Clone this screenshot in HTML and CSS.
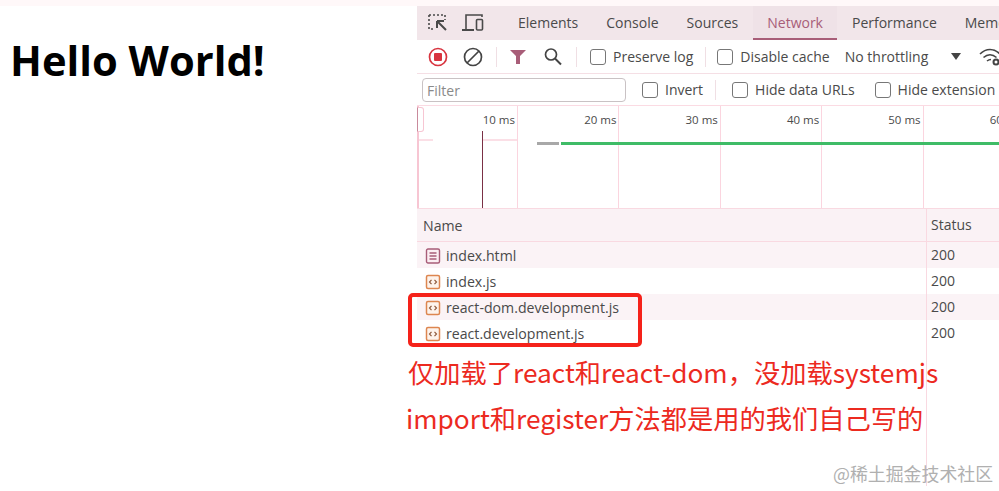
FILE: index.html
```html
<!doctype html>
<html lang="en">
<head>
    <meta charset="UTF-8">
    <title>Hello World</title>
    <link rel="stylesheet" href="styles.css">
</head>
<body>
<div class="page">
    <h1>Hello World!</h1>
    <div class="devtools">
        <div class="tabs">
            <svg class="tab-icon" width="22" height="22" viewBox="0 0 22 22" fill="none" stroke="#4a4a4a" stroke-width="1.6">
                <path d="M2 3h16v5M2 3v14h5" stroke-dasharray="2 2"/>
                <path d="M10 9h7M10 9v7M10 9l9 9" stroke-width="2"/>
            </svg>
            <svg class="tab-icon" width="22" height="22" viewBox="0 0 22 22" fill="none" stroke="#4a4a4a" stroke-width="1.6">
                <path d="M4 17V3h16v2"/>
                <path d="M0 18h12" stroke-width="2"/>
                <rect x="14.500" y="7.500" width="6" height="10.500" rx="1"/>
            </svg>
            <span class="tab tab-first">Elements</span>
            <span class="tab">Console</span>
            <span class="tab">Sources</span>
            <span class="tab active">Network</span>
            <span class="tab">Performance</span>
            <span class="tab">Memory</span>
        </div>
        <div class="toolbar">
            <svg class="tool" width="20" height="20" viewBox="0 0 20 20" fill="none">
                <circle cx="10" cy="10" r="8.500" stroke="#d8343f" stroke-width="1.700"/>
                <rect x="6" y="6" width="8" height="8" rx="1" fill="#d8343f"/>
            </svg>
            <svg class="tool ml-15" width="20" height="20" viewBox="0 0 20 20" fill="none" stroke="#444" stroke-width="1.700">
                <circle cx="10" cy="10" r="8.500"/>
                <path d="M4 16L16 4"/>
            </svg>
            <i class="sep sep-a"></i>
            <svg class="tool" width="18" height="16" viewBox="0 0 18 16"><path d="M1 1h16l-6 6v8H7V7z" fill="#a85d78"/></svg>
            <svg class="tool ml-16" width="20" height="20" viewBox="0 0 20 20" fill="none" stroke="#444" stroke-width="1.700">
                <circle cx="8" cy="7.500" r="5.500"/>
                <path d="M12 11.500l6 6" stroke-width="2"/>
            </svg>
            <i class="sep sep-b"></i>
            <label class="check"><i class="box"></i>Preserve log</label>
            <i class="sep sep-c"></i>
            <label class="check"><i class="box"></i>Disable cache</label>
            <span class="throttle">No throttling</span>
            <i class="arrow"></i>
            <svg class="tool wifi" width="24" height="20" viewBox="0 0 24 20" fill="none" stroke="#444" stroke-width="1.600">
                <path d="M1 7c6-6 14-6 20 0M4.500 10.500c4-3.500 9-3.500 13 0M8 14c1.500-1.200 3-1.500 4-1.500"/>
                <circle cx="17" cy="15" r="2.500" stroke-width="2"/>
            </svg>
        </div>
        <div class="filter-row">
            <div class="filter">Filter</div>
            <label class="check check-invert"><i class="box"></i>Invert</label>
            <i class="sep sep-d"></i>
            <label class="check check-urls"><i class="box"></i>Hide data URLs</label>
            <label class="check check-ext"><i class="box"></i>Hide extension</label>
        </div>
        <div class="timeline">
            <div class="tick"><span>10 ms</span></div>
            <div class="tick"><span>20 ms</span></div>
            <div class="tick"><span>30 ms</span></div>
            <div class="tick"><span>40 ms</span></div>
            <div class="tick"><span>50 ms</span></div>
            <div class="tick"><span>60 ms</span></div>
            <i class="handle"></i>
            <i class="dash dash-a"></i>
            <i class="dash dash-b"></i>
            <i class="marker"></i>
            <i class="wait"></i>
            <i class="load"></i>
        </div>
        <div class="row head">
            <div class="col-name">Name</div>
            <div class="col-status">Status</div>
        </div>
        <div class="row odd">
            <div class="col-name">
                <svg width="16" height="16" viewBox="0 0 16 16" fill="#fbeef2" stroke="#a85d78" stroke-width="1.400">
                    <rect x="1.500" y="1" width="13" height="14" rx="1.500"/>
                    <path d="M4.500 5h7M4.500 8h7M4.500 11h7"/>
                </svg>
                index.html
            </div>
            <div class="col-status">200</div>
        </div>
        <div class="row">
            <div class="col-name">
                <svg width="16" height="16" viewBox="0 0 16 16" fill="#fdf3ec" stroke="#dd8650" stroke-width="1.500">
                    <rect x="1.500" y="1.500" width="13" height="13" rx="1.500"/>
                    <path d="M6.500 5.800L4.500 8l2 2.200M9.500 5.800l2 2.200-2 2.200" fill="none" stroke="#8f5a3c" stroke-width="1.200"/>
                </svg>
                index.js
            </div>
            <div class="col-status">200</div>
        </div>
        <div class="row odd">
            <div class="col-name">
                <svg width="16" height="16" viewBox="0 0 16 16" fill="#fdf3ec" stroke="#dd8650" stroke-width="1.500">
                    <rect x="1.500" y="1.500" width="13" height="13" rx="1.500"/>
                    <path d="M6.500 5.800L4.500 8l2 2.200M9.500 5.800l2 2.200-2 2.200" fill="none" stroke="#8f5a3c" stroke-width="1.200"/>
                </svg>
                react-dom.development.js
            </div>
            <div class="col-status">200</div>
        </div>
        <div class="row">
            <div class="col-name">
                <svg width="16" height="16" viewBox="0 0 16 16" fill="#fdf3ec" stroke="#dd8650" stroke-width="1.500">
                    <rect x="1.500" y="1.500" width="13" height="13" rx="1.500"/>
                    <path d="M6.500 5.800L4.500 8l2 2.200M9.500 5.800l2 2.200-2 2.200" fill="none" stroke="#8f5a3c" stroke-width="1.200"/>
                </svg>
                react.development.js
            </div>
            <div class="col-status">200</div>
        </div>
        <div class="row blank">
            <div class="col-name"></div>
            <div class="col-status"></div>
        </div>
    </div>
</div>
<div class="red-box"></div>
<div class="note note-1">仅加载了react和react-dom，没加载systemjs</div>
<div class="note note-2">import和register方法都是用的我们自己写的</div>
<div class="mark">@稀土掘金技术社区</div>
</body>
</html>
```

FILE: styles.css
```css
html, body {
    margin: 0;
    height: 491px;
    overflow: hidden;
    background-color: #fff;
}
body {
    font-family: "Open Sans", "Noto Sans", sans-serif;
    color: #4a4a4a;
}
.page {
    display: flex;
    height: 491px;
    border-top: 6px solid #fff8f9;
    box-sizing: border-box;
}
h1 {
    width: 417px;
    flex: none;
    margin: 0;
    padding: 29px 0 0 10px;
    box-sizing: border-box;
    font-size: 41.700px;
    line-height: 50px;
    font-weight: 700;
    color: #000;
}
.devtools {
    flex: 1;
    min-width: 0;
    overflow: hidden;
    font-size: 14px;
}
.tabs {
    display: flex;
    align-items: center;
    height: 34px;
    padding-left: 10px;
    background-color: #f2e6ea;
    white-space: nowrap;
}
.tab-icon {
    flex: none;
}
.tab-icon + .tab-icon {
    margin-left: 13px;
}
.tab {
    line-height: 34px;
    padding: 0 14px;
    height: 34px;
    box-sizing: border-box;
}
.tab-first {
    margin-left: 20px;
}
.tab.active {
    margin: 0 1px;
    color: #a85d78;
    background-color: #efe2e7;
    border-bottom: 2px solid #a85d78;
}
.toolbar {
    display: flex;
    align-items: center;
    height: 34px;
    padding-left: 11px;
    border-bottom: 1px solid #f5dfe5;
    box-sizing: border-box;
    white-space: nowrap;
}
.tool {
    flex: none;
}
.ml-15 {
    margin-left: 15px;
}
.ml-16 {
    margin-left: 16px;
}
.sep {
    width: 1px;
    height: 20px;
    background-color: #f0dfe4;
    flex: none;
}
.sep-a {
    margin: 0 12px 0 13px;
}
.sep-b {
    margin: 0 13px;
}
.sep-c {
    margin: 0 11px 0 12px;
}
.sep-d {
    margin-left: 12px;
}
.check {
    display: flex;
    align-items: center;
    white-space: nowrap;
}
.box {
    width: 14px;
    height: 14px;
    margin-right: 7px;
    border: 1px solid #777;
    border-radius: 3px;
    flex: none;
}
.throttle {
    margin-left: 15px;
}
.arrow {
    margin-left: 23px;
    border-left: 5px solid transparent;
    border-right: 5px solid transparent;
    border-top: 7px solid #444;
}
.wifi {
    margin-left: 18px;
}
.filter-row {
    display: flex;
    align-items: center;
    height: 32px;
    padding-left: 5px;
    border-bottom: 1px solid #fbdbe3;
    box-sizing: border-box;
    white-space: nowrap;
}
.filter {
    width: 198px;
    height: 22px;
    line-height: 23px;
    padding-left: 4px;
    border: 1px solid #c9c2c4;
    border-radius: 4px;
    color: #8a8a8a;
    flex: none;
}
.check-invert {
    margin-left: 16px;
}
.check-urls {
    margin-left: 16px;
}
.check-ext {
    margin-left: 20px;
}
.timeline {
    position: relative;
    display: flex;
    height: 102px;
    border-left: 2px solid #f7c6d3;
    box-sizing: border-box;
    font-size: 11.500px;
}
.tick {
    flex: none;
    width: 101.400px;
    height: 102px;
    padding: 6px 2px 0 0;
    box-sizing: border-box;
    border-right: 1px solid #fbd5df;
    text-align: right;
    white-space: nowrap;
}
.tick:first-child {
    margin-left: -2.400px;
}
.handle {
    position: absolute;
    left: -2px;
    top: 1px;
    width: 5px;
    height: 23px;
    background-color: #fff;
    border: 1px solid #f7c6d3;
    border-left: 1px solid #c98a9c;
    border-radius: 0 3px 3px 0;
}
.dash {
    position: absolute;
    top: 33px;
    height: 2px;
    background-color: #fbdfe6;
}
.dash-a {
    left: 0;
    width: 14px;
}
.dash-b {
    left: 64px;
    width: 34px;
}
.marker {
    position: absolute;
    left: 63px;
    top: 25px;
    width: 1px;
    height: 77px;
    background-color: #7a3045;
}
.wait {
    position: absolute;
    left: 118px;
    top: 36px;
    width: 22px;
    height: 3px;
    background-color: #a8a8a8;
}
.load {
    position: absolute;
    left: 142px;
    top: 36px;
    right: 0;
    height: 3px;
    background-color: #3fbc67;
}
.row {
    display: flex;
    height: 26px;
    line-height: 26px;
}
.head {
    height: 34px;
    line-height: 31px;
    background-color: #faf2f5;
    border-top: 1px solid #f9d9e1;
    border-bottom: 1px solid #f9d9e1;
    box-sizing: border-box;
}
.odd {
    background-color: #fbf3f6;
}
.blank {
    height: 140px;
}
.col-name {
    display: flex;
    align-items: center;
    gap: 5px;
    width: 510px;
    padding: 1px 0 0 8px;
    box-sizing: border-box;
    flex: none;
    font-size: 14.150px;
    border-right: 1px solid #f9d9e1;
}
.head .col-name {
    padding: 0 0 0 6px;
}
.col-status {
    padding-left: 4px;
}
.red-box {
    position: absolute;
    left: 408px;
    top: 293px;
    width: 226px;
    height: 46px;
    border: 4px solid #f5221a;
    border-radius: 5px;
}
.note {
    position: absolute;
    left: 408px;
    font-family: "Noto Sans CJK SC", sans-serif;
    font-size: 26.250px;
    line-height: 36px;
    color: #ec2a1f;
    white-space: nowrap;
}
.note-1 {
    top: 354px;
}
.note-2 {
    top: 400px;
    left: 406px;
}
.mark {
    position: absolute;
    left: 833px;
    top: 462px;
    font-family: "Noto Sans CJK SC", sans-serif;
    font-size: 17.900px;
    line-height: 22px;
    color: #b0b0b0;
    white-space: nowrap;
}
```
